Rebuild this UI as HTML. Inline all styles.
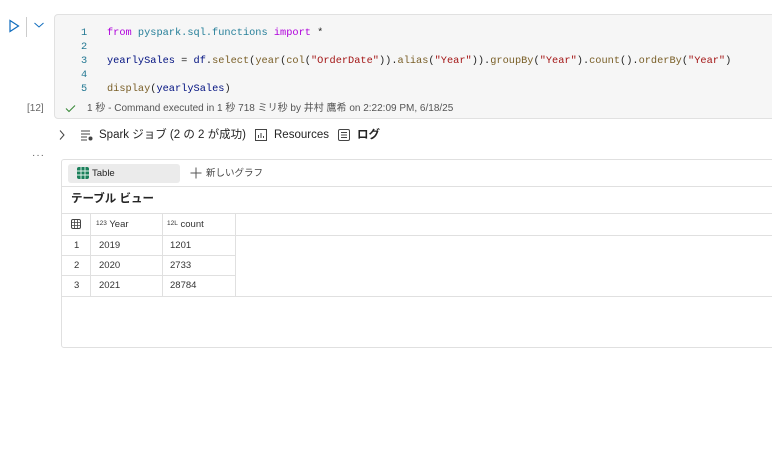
<!DOCTYPE html><html><head><style>
body{margin:0;width:772px;height:468px;background:#fff;position:relative;overflow:hidden;font-family:"Liberation Sans","Noto Sans CJK JP",sans-serif;color:#242424}
.a{position:absolute;line-height:14px;white-space:nowrap}
.cell{left:54px;top:14px;width:730px;height:103px;background:#f6f6f6;border:1px solid #e1e1e1;border-radius:4px}
.code{font-family:"Liberation Mono",monospace;font-size:10.3px;white-space:pre}
.ln{color:#237893;left:81px;font-family:"Liberation Mono",monospace;font-size:10.3px}
.k{color:#af00db}.f{color:#795e26}.v{color:#001080}.s{color:#a31515}.t{color:#267f99}
.sm{font-size:10px;color:#555}
.out{left:61px;top:159px;width:720px;height:187px;border:1px solid #e0e0e0;border-radius:3px}
.hl{background:#e0e0e0;height:1px}
.vl{background:#e0e0e0;width:1px}
.td{font-size:9.5px;color:#333}
</style></head><body>
<svg class="a" style="left:8px;top:19px" width="12" height="14"><path d="M2 1.5 L10.5 7 L2 12.5 Z" fill="none" stroke="#0f6cbd" stroke-width="1.2"/></svg>
<div class="a" style="left:26px;top:17px;width:1px;height:20px;background:#ccc"></div>
<svg class="a" style="left:33px;top:21px" width="12" height="8"><path d="M1.5 2 L6 6 L10.5 2" fill="none" stroke="#0f6cbd" stroke-width="1"/></svg>
<div class="a cell"></div>
<div class="a ln" style="top:26px">1</div><div class="a ln" style="top:40px">2</div><div class="a ln" style="top:54px">3</div><div class="a ln" style="top:68px">4</div><div class="a ln" style="top:82px">5</div>
<div class="a code" style="left:107px;top:26px"><span class="k">from</span> <span class="t">pyspark.sql.functions</span> <span class="k">import</span> *</div>
<div class="a code" style="left:107px;top:54px"><span class="v">yearlySales</span> = <span class="v">df</span>.<span class="f">select</span>(<span class="f">year</span>(<span class="f">col</span>(<span class="s">"OrderDate"</span>)).<span class="f">alias</span>(<span class="s">"Year"</span>)).<span class="f">groupBy</span>(<span class="s">"Year"</span>).<span class="f">count</span>().<span class="f">orderBy</span>(<span class="s">"Year"</span>)</div>
<div class="a code" style="left:107px;top:82px"><span class="f">display</span>(<span class="v">yearlySales</span>)</div>
<div class="a sm" style="left:27px;top:102px;color:#666">[12]</div>
<svg class="a" style="left:65px;top:104px" width="11" height="9"><path d="M1 4.5 L4 7.5 L10 1.5" fill="none" stroke="#3a8a3a" stroke-width="1.1"/></svg>
<div class="a sm" style="left:87px;top:102px">1 秒 - Command executed in 1 秒 718 ミリ秒 by 井村 鷹希 on 2:22:09 PM, 6/18/25</div>
<svg class="a" style="left:58px;top:129px" width="8" height="12"><path d="M2 1.5 L6 6 L2 10.5" fill="none" stroke="#444" stroke-width="1"/></svg>
<svg class="a" style="left:80px;top:129px" width="13" height="12"><path d="M1 2h9M1 5h9M1 8h6M1 11h6" stroke="#444" stroke-width="1"/><circle cx="10.5" cy="9.5" r="2" fill="#444"/></svg>
<div class="a" style="left:99px;top:128px;font-size:11.5px">Spark ジョブ (2 の 2 が成功)</div>
<svg class="a" style="left:255px;top:129px" width="12" height="12"><rect x="0.5" y="0.5" width="11" height="11" fill="none" stroke="#444"/><path d="M3.5 9V6M6 9V4M8.5 9V7" stroke="#444"/></svg>
<div class="a" style="left:274px;top:128px;font-size:11.5px">Resources</div>
<svg class="a" style="left:338px;top:129px" width="12" height="12"><rect x="0.5" y="0.5" width="11" height="11" rx="1.5" fill="none" stroke="#444"/><path d="M3 3.5h6M3 6h6M3 8.5h6" stroke="#444"/></svg>
<div class="a" style="left:357px;top:128px;font-size:11.5px;font-weight:bold">ログ</div>
<div class="a" style="left:32px;top:149px;font-size:10px;color:#555;letter-spacing:1px">···</div>
<div class="a out"></div>
<div class="a" style="left:68px;top:164px;width:112px;height:19px;background:#ebebeb;border-radius:3px"></div>
<svg class="a" style="left:77px;top:167px" width="12" height="12"><rect width="12" height="12" rx="2" fill="#1a7f5a"/><path d="M4 0v12M8 0v12M0 4h12M0 8h12" stroke="#e8f5ef" stroke-width="0.9"/></svg>
<div class="a" style="left:92px;top:167px;font-size:9.5px">Table</div>
<svg class="a" style="left:190px;top:167px" width="12" height="12"><path d="M6 0.5v11M0.5 6h11" stroke="#555" stroke-width="1"/></svg>
<div class="a" style="left:206px;top:167px;font-size:9.5px;color:#444">新しいグラフ</div>
<div class="a hl" style="left:62px;top:186px;width:710px"></div>
<div class="a" style="left:71px;top:192px;font-size:11.5px;font-weight:bold">テーブル ビュー</div>
<div class="a hl" style="left:62px;top:213px;width:710px"></div>
<div class="a hl" style="left:62px;top:235px;width:710px"></div>
<div class="a hl" style="left:62px;top:255px;width:173px"></div>
<div class="a hl" style="left:62px;top:275px;width:173px"></div>
<div class="a hl" style="left:62px;top:296px;width:710px"></div>
<div class="a vl" style="left:90px;top:213px;height:83px"></div>
<div class="a vl" style="left:162px;top:213px;height:83px"></div>
<div class="a vl" style="left:235px;top:213px;height:83px"></div>
<svg class="a" style="left:71px;top:219px" width="10" height="10"><rect x="0.5" y="0.5" width="9" height="9" rx="1.5" fill="none" stroke="#444"/><path d="M3.5 0v10M6.5 0v10M0 3.5h10M0 6.5h10" stroke="#444" stroke-width="0.8"/></svg>
<div class="a td" style="left:96px;top:217px"><span style="font-size:6.5px;vertical-align:2px">123</span> Year</div>
<div class="a td" style="left:167px;top:217px"><span style="font-size:6.5px;vertical-align:2px">12L</span> count</div>
<div class="a td" style="left:74px;top:239px">1</div><div class="a td" style="left:99px;top:239px">2019</div><div class="a td" style="left:170px;top:239px">1201</div>
<div class="a td" style="left:74px;top:259px">2</div><div class="a td" style="left:99px;top:259px">2020</div><div class="a td" style="left:170px;top:259px">2733</div>
<div class="a td" style="left:74px;top:279px">3</div><div class="a td" style="left:99px;top:279px">2021</div><div class="a td" style="left:170px;top:279px">28784</div>
</body></html>
